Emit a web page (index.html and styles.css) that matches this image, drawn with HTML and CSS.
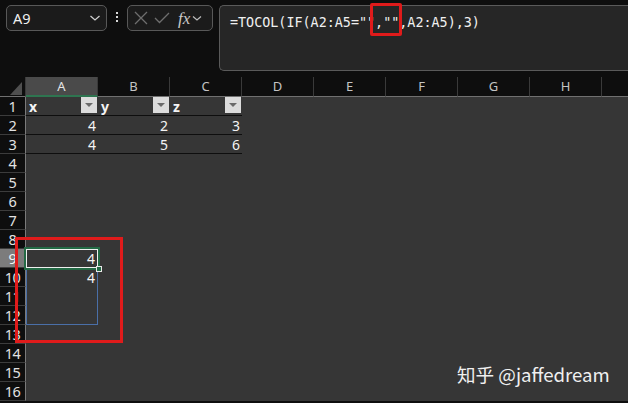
FILE: index.html
```html
<!DOCTYPE html>
<html>
<head>
<meta charset="utf-8">
<link rel="stylesheet" href="styles.css">
</head>
<body>
<div class="topbar">
  <div class="namebox"><span>A9</span>
    <svg width="12" height="8" viewBox="0 0 12 8"><path d="M1.5 2 L6 6 L10.5 2" fill="none" stroke="#cfcfcf" stroke-width="1.3"/></svg>
  </div>
  <div class="dots"><i></i><i></i><i></i></div>
  <div class="fxbox">
    <svg width="14" height="14" viewBox="0 0 14 14"><path d="M1 1 L13 13 M13 1 L1 13" stroke="#6e6e6e" stroke-width="1.3"/></svg>
    <svg width="16" height="12" viewBox="0 0 16 12"><path d="M1 6 L5.5 10.5 L15 1" fill="none" stroke="#6e6e6e" stroke-width="1.3"/></svg>
    <span class="fx">fx</span>
    <svg width="10" height="7" viewBox="0 0 10 7"><path d="M1 1.5 L5 5 L9 1.5" fill="none" stroke="#bdbdbd" stroke-width="1.2"/></svg>
  </div>
  <div class="formula">
    <span class="ftext">=TOCOL(IF(A2:A5="",&quot;&quot;,A2:A5),3)</span>
    <div class="redbox-f"></div>
  </div>
</div>

<div class="sheet">
  <div class="corner"><svg width="12" height="13" viewBox="0 0 12 13"><path d="M12 0 L12 13 L0 13 Z" fill="#4f4f4f"/></svg></div>
  <div class="ch sel">A</div><div class="ch">B</div><div class="ch">C</div><div class="ch">D</div><div class="ch">E</div><div class="ch">F</div><div class="ch">G</div><div class="ch">H</div><div class="ch"></div>

  <div class="rh">1</div>
  <div class="c th">x<span class="filt"></span></div><div class="c th">y<span class="filt"></span></div><div class="c th">z<span class="filt"></span></div><div class="rest"></div>

  <div class="rh">2</div>
  <div class="c tb">4</div><div class="c tb">2</div><div class="c tb">3</div><div class="rest"></div>

  <div class="rh">3</div>
  <div class="c tb">4</div><div class="c tb">5</div><div class="c tb">6</div><div class="rest"></div>

  <div class="rh">4</div><div class="full"></div>
  <div class="rh">5</div><div class="full"></div>
  <div class="rh">6</div><div class="full"></div>
  <div class="rh">7</div><div class="full"></div>
  <div class="rh">8</div><div class="full"></div>
  <div class="rh selr">9</div><div class="c num active">4<span class="handle"></span></div><div class="rest"></div>
  <div class="rh">10</div><div class="c num">4</div><div class="rest"></div>
  <div class="rh">11</div><div class="full"></div>
  <div class="rh">12</div><div class="full"></div>
  <div class="rh">13</div><div class="full"></div>
  <div class="rh">14</div><div class="full"></div>
  <div class="rh">15</div><div class="full"></div>
  <div class="rh">16</div><div class="full"></div>

  <div class="spill"></div>
  <div class="redbox-s"></div>
  <div class="watermark">知乎 @jaffedream</div>
</div>
</body>
</html>
```

FILE: styles.css
```css
html, body {
  margin: 0;
  padding: 0;
  background: #0e0e0e;
  width: 628px;
  height: 403px;
  overflow: hidden;
  font-family: "Noto Sans", "Open Sans", sans-serif;
}

.topbar {
  display: flex;
  align-items: flex-start;
  height: 77px;
  padding: 5px 0 0 6px;
  box-sizing: border-box;
}

.namebox {
  width: 101px;
  height: 26px;
  box-sizing: border-box;
  border: 1px solid #585858;
  border-radius: 5px;
  background: #1b1b1b;
  display: flex;
  align-items: center;
  justify-content: space-between;
  padding: 0 5px 0 6px;
  color: #f0f0f0;
  font-size: 14.5px;
}

.dots {
  width: 3px;
  margin: 7px 8px 0 9px;
  display: flex;
  flex-direction: column;
  gap: 2px;
}
.dots i {
  display: block;
  width: 2px;
  height: 2px;
  background: #d8d8d8;
}

.fxbox {
  width: 86px;
  height: 26px;
  box-sizing: border-box;
  border: 1px solid #585858;
  border-radius: 5px;
  background: #1b1b1b;
  display: flex;
  align-items: center;
  padding: 0 3px 0 6px;
  gap: 6px;
}
.fx {
  font-family: "Liberation Serif", "DejaVu Serif", serif;
  font-style: italic;
  font-size: 17px;
  color: #c8c8c8;
  margin-left: 2px;
  margin-right: -4px;
  line-height: 1;
}

.formula {
  position: relative;
  flex: 1;
  height: 66px;
  margin-left: 6px;
  box-sizing: border-box;
  border: 1px solid #5a5a5a;
  border-right: none;
  border-radius: 5px 0 0 5px;
  background: #262626;
  padding: 4px 0 0 10px;
}
.ftext {
  font-family: "DejaVu Sans Mono", "Liberation Mono", monospace;
  font-size: 13.4px;
  color: #f0f0f0;
}
.redbox-f {
  position: absolute;
  left: 150px;
  top: -3px;
  width: 26px;
  height: 27px;
  border: 3px solid #e01b1b;
  border-radius: 2px;
}

.sheet {
  position: relative;
  display: grid;
  grid-template-columns: 26px repeat(9, 72px);
  grid-template-rows: 20px;
  grid-auto-rows: 19px;
  background: #363636;
}

.corner {
  background: #0e0e0e;
  border-bottom: 1px solid #707070;
  border-right: 1px solid #3a3a3a;
  box-sizing: border-box;
  display: flex;
  align-items: flex-end;
  justify-content: flex-end;
  padding: 0 3px 1px 0;
}

.ch {
  background: #0e0e0e;
  color: #c4c4c4;
  font-size: 13px;
  text-align: center;
  line-height: 19px;
  border-bottom: 1px solid #707070;
  border-right: 1px solid #3a3a3a;
  box-sizing: border-box;
}
.ch.sel {
  background: #4a4a4a;
  color: #e4e4e4;
  border-bottom: 2px solid #2e7550;
  line-height: 18px;
}

.rh {
  background: #0e0e0e;
  color: #e2e2e2;
  font-size: 14.5px;
  line-height: 19px;
  text-align: center;
  border-right: 1px solid #7a7a7a;
  border-bottom: 1px solid #3c3c3c;
  box-sizing: border-box;
  letter-spacing: -0.5px;
}
.rh.selr {
  background: #7c7c7c;
  color: #f4f4f4;
}

.rest { grid-column: 5 / -1; }
.full { grid-column: 2 / -1; }

.c {
  position: relative;
  color: #f4f4f4;
  font-size: 14px;
  line-height: 19px;
  box-sizing: border-box;
}
.th {
  font-weight: bold;
  padding-left: 3px;
  border-bottom: 1px solid #0e0e0e;
}
.tb {
  text-align: right;
  padding-right: 2px;
  border-bottom: 1px solid #0e0e0e;
}
.num {
  text-align: right;
  padding-right: 3px;
}
.filt {
  position: absolute;
  right: 1px;
  top: 0;
  width: 16px;
  height: 16px;
  background: #dcdcdc;
  box-sizing: border-box;
}
.filt::after {
  content: "";
  position: absolute;
  left: 4px;
  top: 6px;
  border-left: 4px solid transparent;
  border-right: 4px solid transparent;
  border-top: 4px solid #6a6a6a;
}

.active {
  outline: 2px solid #246a45;
  box-shadow: inset 0 0 0 1px #f0f0f0;
  z-index: 2;
}
.handle {
  position: absolute;
  right: -4px;
  bottom: -4px;
  width: 6px;
  height: 6px;
  background: #246a45;
  border: 1px solid #e8e8e8;
  box-sizing: border-box;
}

.spill {
  position: absolute;
  left: 26px;
  top: 172px;
  width: 72px;
  height: 76px;
  border: 1px solid #4a6fa8;
  box-sizing: border-box;
  z-index: 1;
}

.redbox-s {
  position: absolute;
  left: 15px;
  top: 160px;
  width: 108px;
  height: 106px;
  border: 3px solid #e01b1b;
  box-sizing: border-box;
  z-index: 3;
}

.watermark {
  position: absolute;
  left: 457px;
  top: 283px;
  font-family: "Noto Sans CJK SC", "Noto Sans", sans-serif;
  font-size: 18.6px;
  color: #f0f0f0;
  white-space: nowrap;
}
```
